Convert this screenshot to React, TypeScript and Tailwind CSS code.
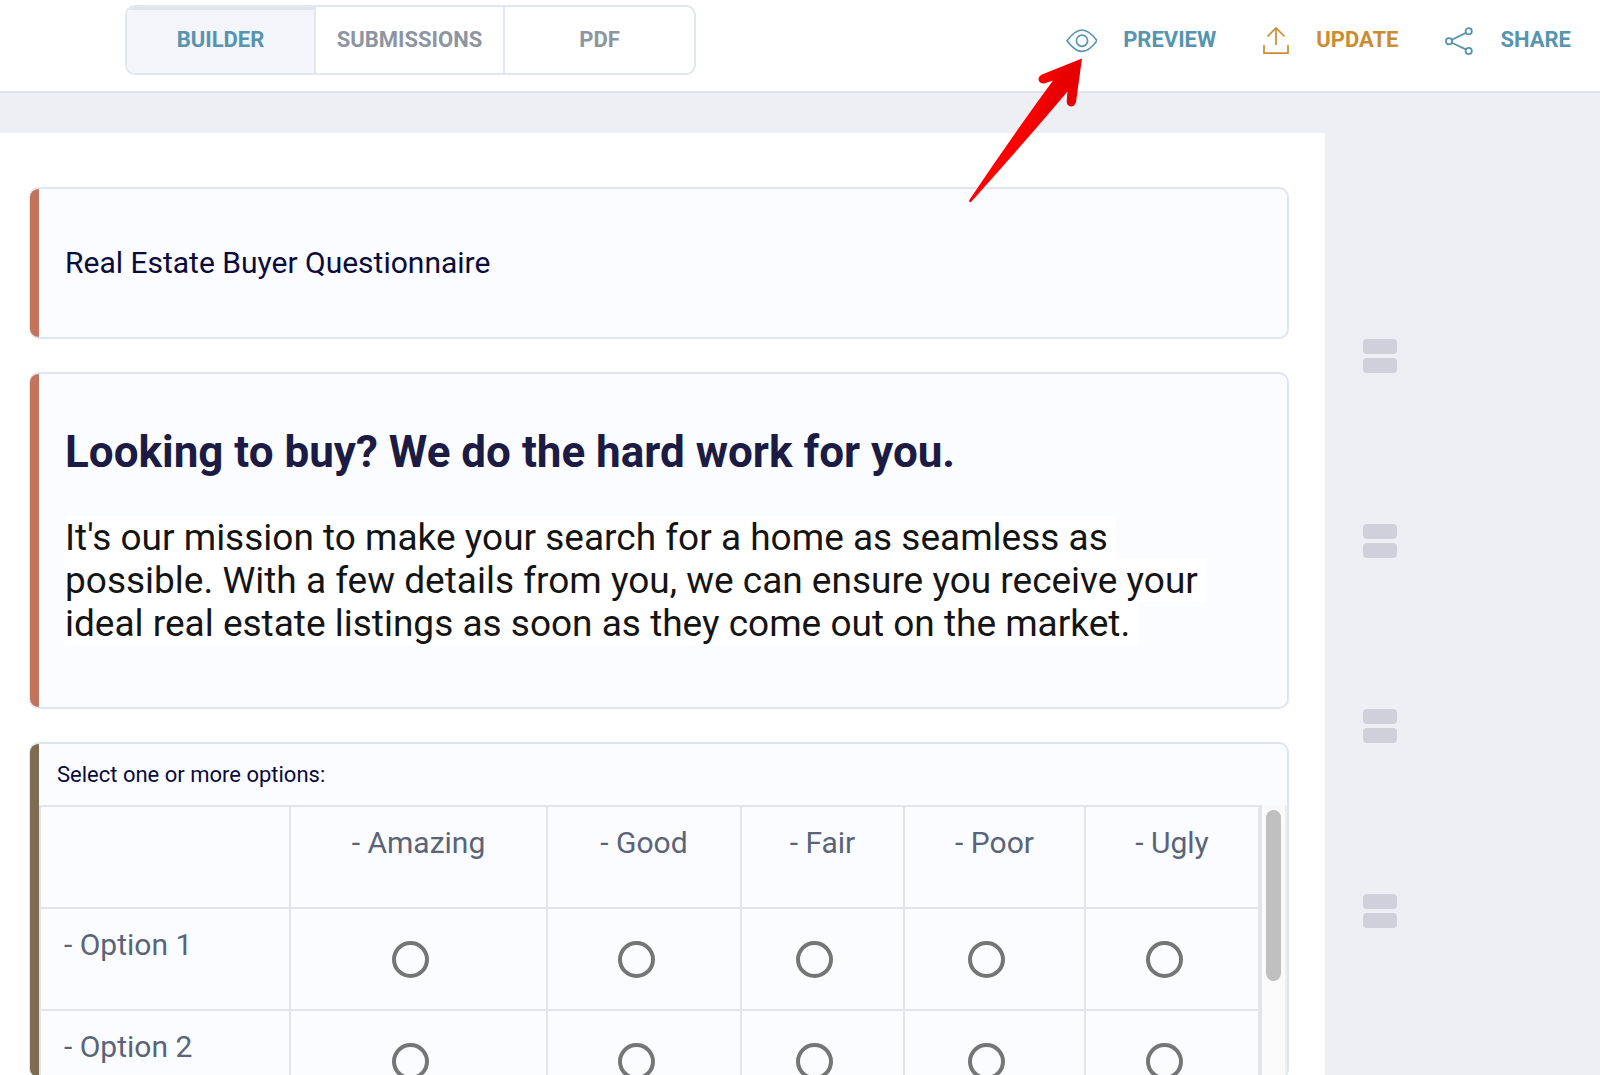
import { useState } from "react";

const tabs = ["BUILDER", "SUBMISSIONS", "PDF"];
const ratings = ["Amazing", "Good", "Fair", "Poor", "Ugly"];
const options = ["Option 1", "Option 2"];

function EyeIcon() {
  return (
    <svg width="32" height="26" viewBox="0 0 32 26" fill="none" stroke="currentColor" strokeWidth="1.7">
      <path d="M2 13.7C5.5 9 10.5 3 17 3S28.5 9 32 13.7C28.5 18.4 23.5 24.4 17 24.4S5.5 18.4 2 13.7Z" strokeLinejoin="round" />
      <circle cx="17" cy="13.7" r="5.6" />
    </svg>
  );
}

function UploadIcon() {
  return (
    <svg width="27" height="30" viewBox="0 0 27 30" fill="none" stroke="currentColor" strokeWidth="1.7">
      <path d="M1 20V28.2H25V20M13 20V3M4.5 11.5L13 3L21.5 11.5" />
    </svg>
  );
}

function ShareIcon() {
  return (
    <svg width="29" height="30" viewBox="0 0 29 30" fill="none" stroke="currentColor" strokeWidth="1.8">
      <circle cx="4" cy="16.3" r="3.1" />
      <circle cx="23.7" cy="6.3" r="3.1" />
      <circle cx="23.7" cy="26" r="3.1" />
      <path d="M6.8 14.8L20.9 7.9M6.8 17.8L20.9 24.4" />
    </svg>
  );
}

function Header() {
  const [active, setActive] = useState("BUILDER");

  return (
    <header className="relative flex h-[93px] shrink-0 items-start justify-between border-b-2 border-[#dfe2ea] bg-white pt-[5px] pr-[29px] pl-[125px]">
      <nav className="flex h-[70px] overflow-hidden rounded-[10px] border-2 border-[#e2e6ee]">
        {tabs.map((tab) => (
          <button
            key={tab}
            onClick={() => setActive(tab)}
            className={
              active === tab
                ? "w-[189px] border-t-3 border-r-2 border-r-[#e2e6ee] border-t-[#e0e5ea] bg-[#f3f5fa] pb-[5px] text-[22px] font-bold text-[#5694af]"
                : "w-[189px] border-r-2 border-[#e2e6ee] pb-[2px] text-[22px] font-bold text-[#8d95a3] last:border-r-0"
            }
          >
            {tab}
          </button>
        ))}
      </nav>

      <div className="flex h-[70px] items-center gap-[47px] text-[22px] font-bold text-[#5694af]">
        <button className="flex items-center gap-[26px]">
          <EyeIcon />
          <span className="pb-[2px]">PREVIEW</span>
        </button>
        <button className="flex items-center gap-[26px] text-[#cc8c32]">
          <UploadIcon />
          <span className="pb-[2px]">UPDATE</span>
        </button>
        <button className="flex items-center gap-[26px]">
          <ShareIcon />
          <span className="pb-[2px]">SHARE</span>
        </button>
      </div>

      {/* pointer to the preview button */}
      <svg className="absolute top-[40px] right-[490px] z-10" width="160" height="180" viewBox="0 0 160 180">
        <defs>
          <linearGradient id="arrow" x1="0.3" y1="0.4" x2="0.7" y2="0.6">
            <stop offset="0.45" stopColor="#ff0000" />
            <stop offset="0.75" stopColor="#e80000" />
          </linearGradient>
        </defs>
        <path
          d="M132 18.5L126 62Q124.5 66.5 121 66.5Q117 66 116.7 61.5L117.5 51.5Q80 96 21.5 161.5Q19.5 163.5 19 160.5Q58 102 103 40.5L94 43.5Q89 43.5 88.5 39.5Q88.5 36 92 34.5Z"
          fill="url(#arrow)"
        />
      </svg>
    </header>
  );
}

function DragHandle() {
  return (
    <div className="flex w-[34px] flex-col gap-1">
      <div className="h-[15px] rounded-[4px] bg-[#d0d0db]" />
      <div className="h-[15px] rounded-[4px] bg-[#d0d0db]" />
    </div>
  );
}

function Card({ stripe, className, children }: any) {
  return (
    <section className={`flex overflow-hidden rounded-[10px] border-2 border-l border-[#dfe5ed] bg-[#fbfcff] ${className}`}>
      <div className={`w-[9px] shrink-0 ${stripe}`} />
      <div className="min-w-0 flex-1">{children}</div>
    </section>
  );
}

function RatingTable() {
  return (
    <div className="flex h-[272px] overflow-hidden">
      <table className="h-[308px] flex-1 table-fixed border-collapse text-[30px] text-[#5a6478]">
        <colgroup>
          <col className="w-[250px]" />
          <col className="w-[257px]" />
          <col className="w-[194px]" />
          <col className="w-[163px]" />
          <col className="w-[181px]" />
          <col />
        </colgroup>
        <thead>
          <tr className="h-[102px] align-top">
            <td className="border-2 border-[#e2e5ed]" />
            {ratings.map((r) => (
              <th key={r} className="border-2 border-[#e2e5ed] pt-[13px] font-normal">
                - {r}
              </th>
            ))}
          </tr>
        </thead>
        <tbody>
          {options.map((o) => (
            <tr key={o} className="h-[102px] align-top">
              <th className="border-2 border-[#e2e5ed] pt-[13px] pl-[23px] text-left font-normal">- {o}</th>
              {ratings.map((r) => (
                <td key={r} className="border-2 border-[#e2e5ed] pt-8 pr-4">
                  <input
                    type="radio"
                    name={o}
                    aria-label={`${o}: ${r}`}
                    className="mx-auto block size-[37px] appearance-none rounded-full border-4 border-[#757575] checked:border-[10px]"
                  />
                </td>
              ))}
            </tr>
          ))}
        </tbody>
      </table>
      <div className="w-[27px] border-x-2 border-l-[#e2e5ed] border-r-[#eeeeee] bg-[#fafafa] pt-[5px] pl-1">
        <div className="h-[171px] w-[15px] rounded-full bg-[#c0c0c0]" />
      </div>
    </div>
  );
}

export default function App() {
  return (
    <div className="flex h-screen flex-col overflow-hidden bg-[#eeeff5] font-[Roboto,sans-serif]">
      <Header />
      <div className="mt-10 flex min-h-0 flex-1">
        <main className="flex flex-1 flex-col gap-[33px] bg-white pt-[54px] pr-9 pl-[29px]">
          <Card stripe="bg-[#c4735c]" className="h-[152px] shrink-0">
            <h1 className="pt-[56px] pl-[26px] text-[30px] leading-[36px] text-[#0a0a3c]">Real Estate Buyer Questionnaire</h1>
          </Card>

          <Card stripe="bg-[#c4735c]" className="h-[337px] shrink-0">
            <div className="pt-[52px] pr-16 pl-[26px]">
              <h2 className="text-[44px] leading-[52px] font-bold text-[#1b1b44]">
                Looking to buy? We do the hard work for you.
              </h2>
              <p className="mt-[38px] text-[37px] leading-[43px] text-[#141414]">
                <span className="bg-white box-decoration-clone pr-2">
                  It's our mission to make your search for a home as seamless as possible. With a few details from you,
                  we can ensure you receive your ideal real estate listings as soon as they come out on the market.
                </span>
              </p>
            </div>
          </Card>

          <Card stripe="bg-[#7f6b50]" className="h-[337px] shrink-0">
            <p className="pt-[17px] pb-4 pl-[18px] text-[22px] leading-7 text-[#0a0a3c]">Select one or more options:</p>
            <RatingTable />
          </Card>
        </main>

        <aside className="flex w-[275px] shrink-0 flex-col gap-[151px] pt-[206px] pl-[38px]">
          <DragHandle />
          <DragHandle />
          <DragHandle />
          <DragHandle />
        </aside>
      </div>
    </div>
  );
}
